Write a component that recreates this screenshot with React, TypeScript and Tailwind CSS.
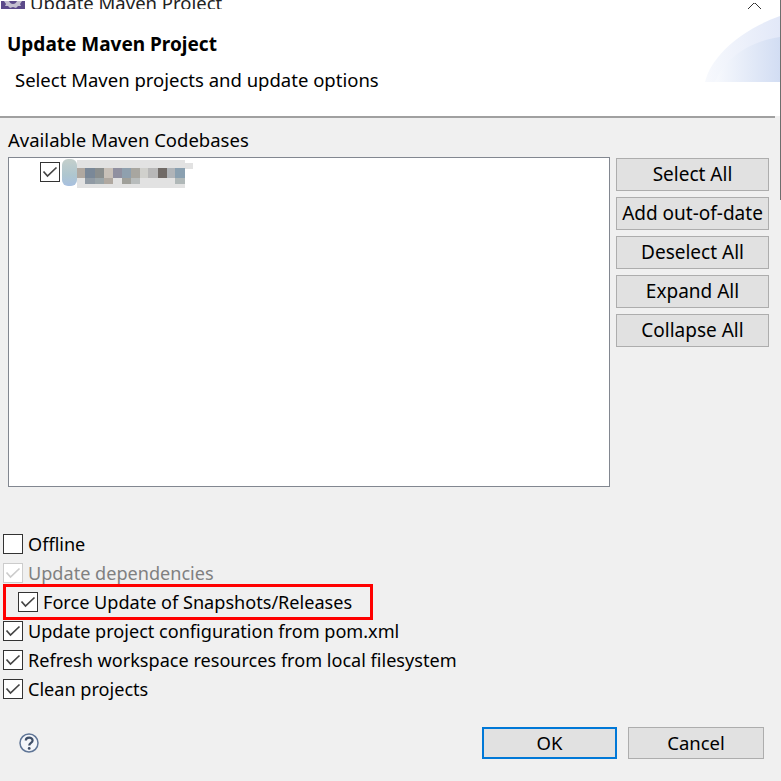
const font = { fontFamily: '"Noto Sans", sans-serif' };

const sideButtons = ['Select All', 'Add out-of-date', 'Deselect All', 'Expand All', 'Collapse All'];

// blurred project name, x from 62 and y from 158 in the picture
const mosaic: [number, number, number, number, string][] = [
  [15, 2, 108, 28, '#e2e2e2'],
  [123, 5, 8, 6, '#e2e2e2'],
  [15, 10, 8, 10, '#b0a8a0'],
  [23, 10, 10, 10, '#7a8898'],
  [33, 10, 9, 10, '#8a8e8e'],
  [42, 10, 9, 10, '#c8c0b8'],
  [51, 10, 9, 10, '#9090a0'],
  [60, 10, 9, 10, '#8fa0ae'],
  [69, 10, 9, 10, '#a8a6a0'],
  [78, 10, 8, 10, '#d0d0cc'],
  [86, 10, 10, 10, '#b8b8b8'],
  [96, 10, 9, 10, '#706a66'],
  [105, 10, 8, 10, '#b0b4b8'],
  [113, 10, 10, 10, '#8aa0b0'],
  [23, 20, 10, 6, '#909aa4'],
  [33, 20, 9, 6, '#9aa4a8'],
  [42, 20, 9, 6, '#b0a8a0'],
  [60, 20, 9, 6, '#a0a09a'],
  [69, 20, 9, 6, '#b8bcbc'],
  [113, 20, 10, 6, '#b0b8b8'],
];

function Check({ disabled = false }: { disabled?: boolean }) {
  return (
    <span
      className={`flex h-[20px] w-[20px] shrink-0 items-center justify-center border-[1.5px] bg-white ${
        disabled ? 'border-[#cccccc]' : 'border-[#333333]'
      }`}
    >
      <svg width="18" height="18" viewBox="0 0 18 18" fill="none">
        <path d="M2.5 8.5 L6.5 13 L15.5 4.5" stroke={disabled ? '#cccccc' : '#444444'} strokeWidth="1.7" />
      </svg>
    </span>
  );
}

function Option({ label, checked = true, disabled = false, indent = false }: { label: string; checked?: boolean; disabled?: boolean; indent?: boolean }) {
  return (
    <div className={`flex h-[29px] items-center gap-[5px] ${indent ? 'pl-[18px]' : 'pl-[3px]'}`}>
      {checked ? <Check disabled={disabled} /> : <span className="h-[20px] w-[20px] shrink-0 border-[1.5px] border-[#333333] bg-white" />}
      <span className={`pt-[2px] text-[18.1px] leading-none ${disabled ? 'text-[#808080]' : 'text-black'}`}>{label}</span>
    </div>
  );
}

export default function App() {
  return (
    <div className="relative flex h-[781px] w-[781px] flex-col overflow-hidden bg-[#f0f0f0]" style={font}>
      <div className="flex h-[116px] shrink-0 flex-col bg-white">
        <div className="flex h-[9px] shrink-0 items-end justify-between overflow-hidden pl-[1px] pr-[18px]">
          <div className="flex shrink-0 items-end gap-[5px]">
            <svg width="24" height="8" viewBox="0 0 24 8">
              <path d="M0 0 H24 V8 H0 Z" fill="#5b4a8a" />
              <path d="M3 0 L5 3 L4 5 L7 5 L9 7 L12 6 L15 7 L17 5 L20 5 L19 3 L21 0 H16 C15 2 14 3 12 3 C10 3 9 2 8 0 Z" fill="#c4c0d0" />
            </svg>
            <span className="-mb-[6px] text-[18.5px] leading-[24px] text-[#222222]">Update Maven Project</span>
          </div>
          <svg width="16" height="6" viewBox="0 0 16 6" fill="none">
            <path d="M1 6 L7 0 L8 0 L14 6" stroke="#333333" strokeWidth="1" />
          </svg>
        </div>
        <div className="relative flex-1">
          <div className="pl-[7px] pt-[23px] text-[19px] font-bold leading-[24px] text-black">Update Maven Project</div>
          <div className="pl-[15px] pt-[12px] text-[18.5px] leading-[24px] text-black">Select Maven projects and update options</div>
          <svg className="absolute right-[1px] top-[7px]" width="75" height="66" viewBox="0 0 75 66">
            <defs>
              <linearGradient id="wash" x1="0" x2="1" y1="0" y2="0">
                <stop offset="0" stopColor="#f7f9fd" />
                <stop offset="1" stopColor="#e2e8f8" />
              </linearGradient>
              <linearGradient id="wash2" x1="0" x2="1" y1="0" y2="0">
                <stop offset="0" stopColor="#f7f9fd" />
                <stop offset="1" stopColor="#d2ddf3" />
              </linearGradient>
            </defs>
            <path d="M0 66 C6 40 36 14 75 0 L75 66 Z" fill="url(#wash)" />
            <path d="M10 66 C18 44 44 25 75 21 L75 66 Z" fill="url(#wash2)" />
          </svg>
        </div>
      </div>

      <div className="flex h-[2px] shrink-0 pr-[6px]">
        <div className="flex-1 bg-[#a0a0a0]" />
      </div>

      <div className="pl-[8px] pt-[9px] text-[18.5px] leading-[26px] text-black">Available Maven Codebases</div>

      <div className="flex pl-[8px] pt-[4px]">
        <div className="h-[330px] w-[602px] border border-[#828790] bg-white pl-[31px] pt-[4px]">
          <div className="flex items-start">
            <Check />
            <svg className="ml-[2px] -mt-[4px]" width="134" height="30" viewBox="0 0 134 30">
              <defs>
                <linearGradient id="blob" x1="0" x2="0" y1="0" y2="1">
                  <stop offset="0" stopColor="#c4cfcb" />
                  <stop offset="0.6" stopColor="#aec6cf" />
                  <stop offset="1" stopColor="#a8c0e0" />
                </linearGradient>
              </defs>
              {mosaic.map(([x, y, w, h, fill], i) => (
                <rect key={i} x={x} y={y} width={w} height={h} fill={fill} />
              ))}
              <rect x="0" y="1" width="15" height="27" rx="6" fill="url(#blob)" />
            </svg>
          </div>
        </div>
        <div className="ml-[6px] flex w-[153px] flex-col gap-[6px] pt-[1px]">
          {sideButtons.map((label) => (
            <button key={label} className="h-[33px] whitespace-nowrap border border-[#adadad] bg-[#e1e1e1] pb-[1px] text-[19px] leading-none text-black">
              {label}
            </button>
          ))}
        </div>
      </div>

      <div className="pt-[42px]">
        <Option label="Offline" checked={false} />
        <Option label="Update dependencies" disabled />
        <Option label="Force Update of Snapshots/Releases" indent />
        <Option label="Update project configuration from pom.xml" />
        <Option label="Refresh workspace resources from local filesystem" />
        <Option label="Clean projects" />
      </div>

      <div className="flex items-center justify-between pl-[19px] pr-[17px] pt-[24px]">
        <svg width="20" height="20" viewBox="0 0 20 20" fill="none">
          <circle cx="10" cy="10" r="9" fill="#f4f6fa" stroke="#5f7596" strokeWidth="1.5" />
          <path d="M6.8 7.6 C6.8 3.6 13.6 3.6 13.6 7.6 C13.6 10 10.2 10 10.2 12.6" stroke="#3f4f68" strokeWidth="2.2" />
          <circle cx="10.2" cy="15.4" r="1.4" fill="#3f4f68" />
        </svg>
        <div className="flex gap-[11px]">
          <button className="h-[32px] w-[135px] border-2 border-[#0078d7] bg-[#e1e1e1] text-[18.5px] leading-none text-black">OK</button>
          <button className="h-[32px] w-[136px] border border-[#adadad] bg-[#e1e1e1] text-[18.5px] leading-none text-black">Cancel</button>
        </div>
      </div>

      <div className="absolute right-0 top-0 h-[200px] w-[1px] bg-[#6e6e6e]" />
      <div className="pointer-events-none absolute left-[3px] top-[584px] h-[36px] w-[370px] border-[3px] border-[#ff0000]" />
    </div>
  );
}
